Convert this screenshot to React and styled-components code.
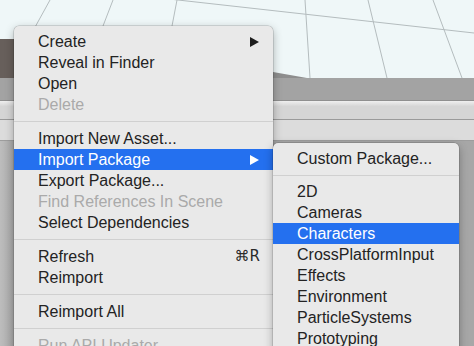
import React from 'react';
import styled, { createGlobalStyle } from 'styled-components';

const Global = createGlobalStyle`
  html, body { margin: 0; padding: 0; background: #ababab; }
  body { font-family: "Liberation Sans", Arial, sans-serif; }
`;

const Page = styled.div`
  position: relative;
  width: 474px;
  height: 346px;
  overflow: hidden;
  display: flex;
  flex-direction: column;
  background: #ababab;
`;

const SceneBand = styled.div`
  flex-shrink: 0;
  display: flex;
  height: 78px;
  background: #eff7f8;
`;

const LeftDock = styled.div`
  width: 14px;
  display: flex;
  flex-direction: column;
  justify-content: flex-end;
`;

const DockTab = styled.div`
  height: 39px;
  background: #675f5b;
`;

const Viewport = styled.svg`
  flex: 1;
  height: 78px;
  display: block;
`;

const Band = styled.div`
  flex-shrink: 0;
  height: ${(p) => p.$h}px;
  background: ${(p) => p.$bg};
  border-bottom: 1px solid ${(p) => p.$line};
`;

const Lower = styled.div`
  flex: 1;
  background: linear-gradient(90deg, #bdbdbd 0, #a9a9a9 13px, #a7a7a7 100%);
`;

const Menu = styled.div`
  position: absolute;
  left: ${(p) => p.$x}px;
  top: ${(p) => p.$y}px;
  width: ${(p) => p.$w}px;
  padding: 5px 0;
  background: #e9e9e9;
  border-radius: 5px 5px 0 0;
  box-shadow: 0 0 0 0.5px rgba(0, 0, 0, 0.22), 0 3px 10px rgba(0, 0, 0, 0.3);
`;

const Row = styled.div`
  display: flex;
  align-items: center;
  justify-content: space-between;
  height: 21px;
  padding: 0 14px 0 24px;
  font-size: 16px;
  line-height: 21px;
  white-space: nowrap;
  color: ${(p) => (p.$active ? '#ffffff' : p.$disabled ? '#aaaaaa' : '#232323')};
  background: ${(p) => (p.$active ? '#2470ef' : 'transparent')};
`;

const Shortcut = styled.span`
  font-family: "DejaVu Sans", "Liberation Sans", sans-serif;
  font-size: 15px;
  margin-right: -1px;
  color: #2a2a2a;
`;

const Separator = styled.div`
  height: 1px;
  margin: 6px 0 ${(p) => p.$bottom ?? 6}px;
  background: #d0d0d0;
`;

const Arrow = ({ color }) => (
  <svg width="9" height="10" viewBox="0 0 9 10">
    <polygon points="0,0 9,5 0,10" fill={color} />
  </svg>
);

const mainItems = [
  { label: 'Create', sub: true },
  { label: 'Reveal in Finder' },
  { label: 'Open' },
  { label: 'Delete', disabled: true },
  'sep',
  { label: 'Import New Asset...' },
  { label: 'Import Package', sub: true, active: true },
  { label: 'Export Package...' },
  { label: 'Find References In Scene', disabled: true },
  { label: 'Select Dependencies' },
  'sep',
  { label: 'Refresh', shortcut: '⌘R' },
  { label: 'Reimport' },
  'sep',
  { label: 'Reimport All' },
  'sep',
  { label: 'Run API Updater...', disabled: true },
];

const subItems = [
  { label: 'Custom Package...' },
  'sep',
  { label: '2D' },
  { label: 'Cameras' },
  { label: 'Characters', active: true },
  { label: 'CrossPlatformInput' },
  { label: 'Effects' },
  { label: 'Environment' },
  { label: 'ParticleSystems' },
  { label: 'Prototyping' },
  { label: 'Utility' },
];

function MenuList({ items, sepBottom }) {
  return items.map((it, i) =>
    it === 'sep' ? (
      <Separator key={i} $bottom={sepBottom} />
    ) : (
      <Row key={i} $active={it.active} $disabled={it.disabled}>
        <span>{it.label}</span>
        {it.sub && <Arrow color={it.active ? '#ffffff' : '#1e1e1e'} />}
        {it.shortcut && <Shortcut>{it.shortcut}</Shortcut>}
      </Row>
    )
  );
}

export default function App() {
  return (
    <>
      <Global />
      <Page>
        <SceneBand>
          <LeftDock>
            <DockTab />
          </LeftDock>
          <Viewport viewBox="14 0 460 78" preserveAspectRatio="none">
            <g stroke="#b4bcbe" strokeWidth="1" fill="none">
              <line x1="50" y1="0" x2="7" y2="78" />
              <line x1="113" y1="0" x2="83" y2="78" />
              <line x1="177" y1="0" x2="162" y2="78" />
              <line x1="305" y1="0" x2="310" y2="78" />
              <line x1="368" y1="0" x2="387" y2="78" />
              <line x1="433" y1="0" x2="462" y2="78" />
              <line x1="160" y1="-2" x2="474" y2="33" />
            </g>
            <polygon points="273,72 307,78 273,78" fill="#8e8e8e" />
          </Viewport>
        </SceneBand>
        <Band $h={22} $bg="#a3a3a3" $line="#8f8f8f" />
        <Band $h={18} $bg="linear-gradient(#efefef, #d5d5d5 30%, #d5d5d5)" $line="#9a9a9a" />
        <Band $h={20} $bg="#dcdcdc" $line="#9d9d9d" />
        <Lower />
        <Menu $x={14} $y={26} $w={259}>
          <MenuList items={mainItems} sepBottom={6} />
        </Menu>
        <Menu $x={273} $y={143} $w={186}>
          <MenuList items={subItems} sepBottom={5} />
        </Menu>
      </Page>
    </>
  );
}
